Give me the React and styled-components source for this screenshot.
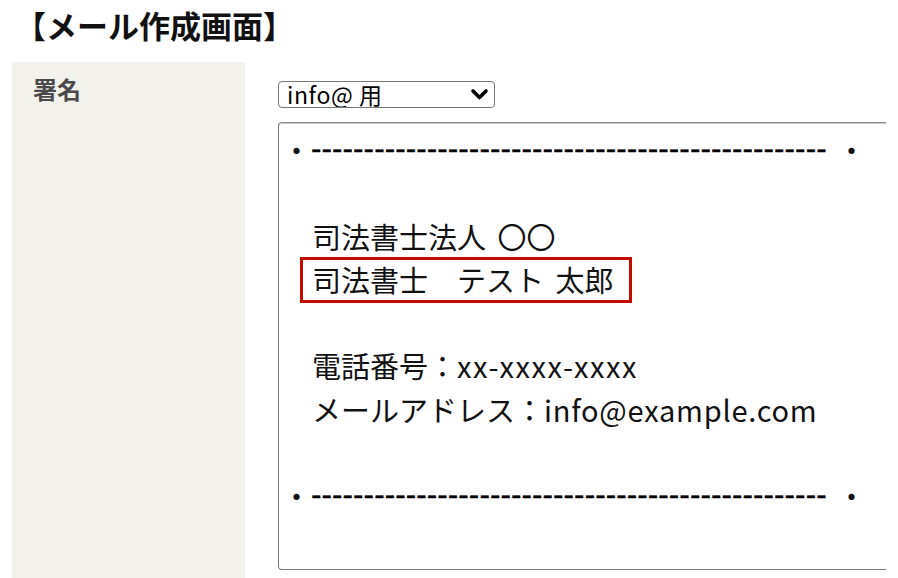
import React from "react";
import styled, { createGlobalStyle } from "styled-components";

const Global = createGlobalStyle`
  html, body { margin: 0; padding: 0; background: #fff; }
  body {
    font-family: "Noto Sans CJK JP", "Noto Sans", sans-serif;
    color: #111;
    width: 898px;
    height: 578px;
    overflow: hidden;
  }
`;

const Page = styled.div`
  display: flex;
  flex-direction: column;
`;

const Heading = styled.h1`
  margin: 0 0 14px;
  height: 48px;
  padding-left: 15px;
  display: flex;
  align-items: center;
  font-size: 31px;
  font-weight: 700;
  color: #111;
`;

const FormRow = styled.div`
  display: flex;
  margin-left: 12px;
  height: 516px;
`;

const LabelCell = styled.div`
  width: 233px;
  flex: none;
  background: #f3f1ec;
  padding: 9px 21px;
  box-sizing: border-box;
  font-size: 24px;
  font-weight: 700;
  color: #4a4a4a;
  line-height: 36px;
`;

const ValueCell = styled.div`
  flex: 1;
  padding: 19px 0 0 33px;
  box-sizing: border-box;
  display: flex;
  flex-direction: column;
  gap: 14px;
  overflow: hidden;
  margin-right: 12px;
`;

const SelectWrap = styled.div`
  position: relative;
  width: 217px;
  height: 27px;
`;

const Select = styled.select`
  appearance: none;
  -webkit-appearance: none;
  width: 100%;
  height: 100%;
  box-sizing: border-box;
  border: 1px solid #767676;
  border-radius: 4px;
  background: #fff;
  padding: 0 0 0 8px;
  font-family: "Noto Sans CJK JP", "Noto Sans", sans-serif;
  font-size: 23px;
  letter-spacing: 0.6px;
  line-height: 25px;
  color: #000;
`;

const Chevron = styled.svg`
  position: absolute;
  right: 6px;
  top: 7px;
  width: 19px;
  height: 13px;
  pointer-events: none;
`;

const TextBox = styled.div`
  width: 640px;
  height: 448px;
  box-sizing: border-box;
  border: 1px solid #7a7a7a;
  border-top-color: #8c8c8c;
  border-radius: 4px;
  box-shadow: inset 0 1px 0 #c8c8c8;
  padding: 5px 0 0 3px;
  font-size: 29px;
  line-height: 43.3px;
  word-spacing: 5px;
  color: #111;
`;

const Line = styled.div`
  height: 43.3px;
  display: flex;
  align-items: center;
  white-space: pre;
  padding-left: ${(p) => (p.$indent ? "30px" : "0")};
`;

const Latin = styled.span`
  letter-spacing: ${(p) => p.$spacing || "0.75px"};
`;

const Dot = styled.span`
  width: 29px;
  flex: none;
  text-align: center;
`;

const Dashes = styled.span`
  width: 516px;
  flex: none;
  overflow: hidden;
  font-family: "DejaVu Sans", sans-serif;
  font-size: 29px;
  letter-spacing: 0.06px;
  color: #000;
  -webkit-text-stroke: 0.4px #000;
`;

const DashTail = styled.span`
  width: 10px;
  flex: none;
`;

const Highlight = styled.span`
  margin-left: 18px;
  height: 46px;
  box-sizing: border-box;
  border: 3px solid #c00d00;
  padding: 0 15px 0 9px;
  display: flex;
  align-items: center;
`;

const dashText = "-".repeat(49);

function DashLine() {
  return (
    <Line>
      <Dot>・</Dot>
      <Dashes>{dashText}</Dashes>
      <DashTail />
      <Dot>・</Dot>
    </Line>
  );
}

export default function App() {
  return (
    <Page>
      <Global />
      <Heading>【メール作成画面】</Heading>
      <FormRow>
        <LabelCell>署名</LabelCell>
        <ValueCell>
          <SelectWrap>
            <Select defaultValue="info">
              <option value="info">info@ 用</option>
            </Select>
            <Chevron viewBox="0 0 19 13">
              <path d="M3 3 L9.5 9.5 L16 3" fill="none" stroke="#000" strokeWidth="3.6" strokeLinecap="round" strokeLinejoin="round" />
            </Chevron>
          </SelectWrap>
          <TextBox>
            <DashLine />
            <Line />
            <Line $indent>司法書士法人 〇〇</Line>
            <Line>
              <Highlight>司法書士　テスト 太郎</Highlight>
            </Line>
            <Line />
            <Line $indent>
              電話番号：<Latin $spacing="1.5px">xx-xxxx-xxxx</Latin>
            </Line>
            <Line $indent>
              メールアドレス：<Latin>info@example.com</Latin>
            </Line>
            <Line />
            <DashLine />
          </TextBox>
        </ValueCell>
      </FormRow>
    </Page>
  );
}
